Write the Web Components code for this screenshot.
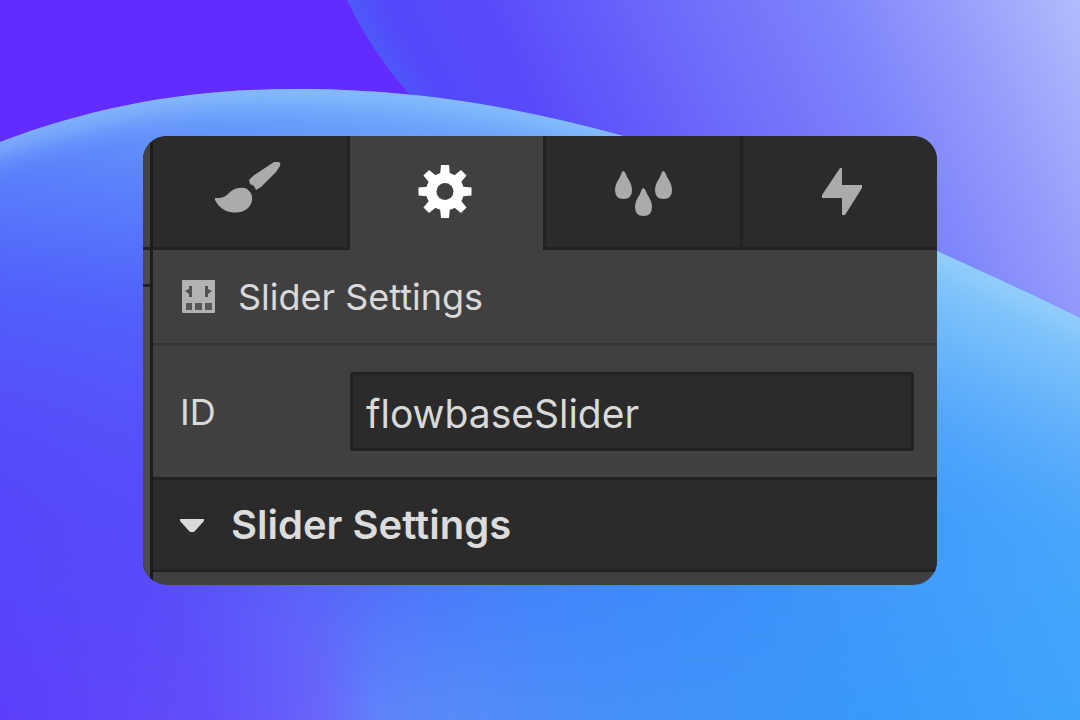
<!DOCTYPE html>
<html lang="en">
<head>
<meta charset="utf-8">
<meta name="viewport" content="width=device-width, initial-scale=1">
<title>Slider Settings</title>
<style>
  body { margin: 0; background: #632cff; font-family: Inter, "Liberation Sans", sans-serif; color: #d9d9d9; }
</style>
</head>
<body>
<settings-stage>
  <settings-panel>
    <panel-tabs></panel-tabs>
    <panel-title>Slider Settings</panel-title>
    <id-field value="flowbaseSlider">ID</id-field>
    <panel-section>Slider Settings</panel-section>
  </settings-panel>
</settings-stage>

<script>
const define = (name, html) => customElements.define(name, class extends HTMLElement {
  constructor() {
    super();
    this.attachShadow({ mode: "open" }).innerHTML = html;
  }
  connectedCallback() {
    const input = this.shadowRoot.querySelector("input");
    if (input) input.value = this.getAttribute("value") || "";
  }
});

define("wave-backdrop", `
  <style>
    :host { display: block; position: fixed; inset: 0; z-index: -1; }
    svg { display: block; width: 100%; height: 100%; }
  </style>
  <svg viewBox="0 0 1080 720" preserveAspectRatio="xMidYMid slice" aria-hidden="true">
    <defs>
      <linearGradient id="back" gradientUnits="userSpaceOnUse" x1="430" y1="50" x2="980" y2="-207">
        <stop offset="0" stop-color="#5549fa"/><stop offset=".12" stop-color="#5a4bfa"/>
        <stop offset=".39" stop-color="#6d6bfa"/><stop offset=".62" stop-color="#7d83fb"/>
        <stop offset=".79" stop-color="#929afb"/><stop offset="1" stop-color="#b0bcfc"/>
      </linearGradient>
      <linearGradient id="front" gradientUnits="userSpaceOnUse" x1="0" y1="0" x2="1080" y2="0">
        <stop offset="0" stop-color="#5746fa"/><stop offset=".16" stop-color="#5a4dfa"/>
        <stop offset=".28" stop-color="#5d65fa"/><stop offset=".38" stop-color="#4e79fa"/>
        <stop offset=".5" stop-color="#4285fa"/><stop offset=".67" stop-color="#3d8ffb"/>
        <stop offset="1" stop-color="#45a6fb"/>
      </linearGradient>
      <linearGradient id="floor" gradientUnits="userSpaceOnUse" x1="0" y1="0" x2="1080" y2="0">
        <stop offset="0" stop-color="#5c3efa"/><stop offset=".2" stop-color="#624ff9"/>
        <stop offset=".3" stop-color="#6a66fa"/><stop offset=".35" stop-color="#6084fa"/>
        <stop offset=".42" stop-color="#588bf9"/><stop offset=".56" stop-color="#4790fa"/>
        <stop offset=".8" stop-color="#3999fa"/><stop offset="1" stop-color="#3fa4fb"/>
      </linearGradient>
      <linearGradient id="down" gradientUnits="userSpaceOnUse" x1="0" y1="590" x2="0" y2="720">
        <stop offset="0" stop-color="#000"/><stop offset="1" stop-color="#fff"/>
      </linearGradient>
      <linearGradient id="across" gradientUnits="userSpaceOnUse" x1="150" y1="0" x2="480" y2="0">
        <stop offset="0" stop-color="#fff"/><stop offset="1" stop-color="#000"/>
      </linearGradient>
      <mask id="lower"><rect width="1080" height="720" fill="url(#down)"/></mask>
      <mask id="leftward"><rect width="1080" height="300" fill="#fff"/><rect y="300" width="1080" height="420" fill="url(#across)"/></mask>
      <linearGradient id="top" gradientUnits="userSpaceOnUse" x1="260" y1="90" x2="180" y2="600">
        <stop offset="0" stop-color="#6ea6fb"/><stop offset=".16" stop-color="#5f8bfb"/>
        <stop offset=".46" stop-color="#5064fa" stop-opacity=".9"/><stop offset="1" stop-color="#5548fa" stop-opacity="0"/>
      </linearGradient>
      <linearGradient id="right" gradientUnits="userSpaceOnUse" x1="1030" y1="285" x2="920" y2="530">
        <stop offset="0" stop-color="#8ccdfb"/><stop offset=".4" stop-color="#65b2fb"/>
        <stop offset="1" stop-color="#469ffb" stop-opacity="0"/>
      </linearGradient>
      <filter id="soft" filterUnits="userSpaceOnUse" x="-60" y="-60" width="1200" height="840"><feGaussianBlur stdDeviation="14"/></filter>
      <clipPath id="hill"><path d="M0 142C95 106 190 89 295 89C420 89 520 108 620 135C735 166 840 207 937 251C990 275 1038 297 1080 318V720H0Z"/></clipPath>
      <clipPath id="slope"><path d="M347 0C362 32 384 66 412 97L620 350H1080V0Z"/></clipPath>
    </defs>
    <rect width="1080" height="720" fill="#632cff"/>
    <g clip-path="url(#slope)">
      <rect x="340" width="740" height="350" fill="url(#back)"/>
      <path d="M335 -30C352 28 378 70 414 116" fill="none" stroke="#4c62fa" stroke-width="34" opacity=".8" filter="url(#soft)"/>
    </g>
    <g clip-path="url(#hill)">
      <rect width="1080" height="720" fill="url(#front)"/>
      <rect width="1080" height="720" fill="url(#floor)" mask="url(#lower)"/>
      <rect width="1080" height="720" fill="url(#top)" mask="url(#leftward)"/>
      <rect x="700" width="380" height="720" fill="url(#right)"/>
      <path d="M-60 160C95 100 190 85 295 85C420 85 520 104 620 131C735 162 840 203 937 247C990 271 1038 293 1130 337" fill="none" stroke="#9bcffc" stroke-width="26" opacity=".75" filter="url(#soft)"/>
    </g>
  </svg>`);

define("settings-stage", `
  <style>
    :host { display: flex; flex-direction: column; justify-content: center; box-sizing: border-box; min-height: 100vh; padding: 16px 143px 15px; }
  </style>
  <wave-backdrop></wave-backdrop>
  <slot></slot>`);

define("settings-panel", `
  <style>
    :host { display: grid; grid-template-columns: 7px 1fr; border-radius: 24px; overflow: hidden; background: #404040; }
    .edge { display: grid; grid-template-rows: 111px 34px 1fr; gap: 3px; background: #222; }
    .edge i { background: #4b4b4b; }
    .edge i:first-child { background: #434343; }
    .body { border-left: 3px solid #1c1c1c; padding-bottom: 13px; min-width: 0; }
  </style>
  <div class="edge" aria-hidden="true"><i></i><i></i><i></i></div>
  <div class="body"><slot></slot></div>`);

define("panel-tabs", `
  <style>
    :host { display: block; }
    div { display: grid; grid-template-columns: 197fr 193fr 197fr 197fr; }
    button { display: flex; align-items: center; justify-content: center; box-sizing: border-box; height: 114px; margin: 0; padding: 0; border: 0 solid #222; border-bottom-width: 3px; background: #2b2b2b; color: #ababab; }
    button:first-child { border-right-width: 3px; }
    button:nth-child(n+3) { border-left-width: 3px; }
    button[aria-selected=true] { background: #404040; border-color: #404040; color: #fff; }
    svg { width: 72px; height: 63px; fill: currentColor; }
  </style>
  <div role="tablist" aria-label="Panels">
    <button role="tab" aria-selected="false" aria-label="Style">
      <svg viewBox="0 0 72 63"><path d="M60 2H65Q67 3 66 6L62 12L47 27L42 30L40 26L36 24L35 20L39 16Z"/><path d="M1 38H6Q12 37 16 32Q22 27 31 28Q36 30 38 36Q39 44 33 49Q26 54 16 52Q6 50 1 40Z"/></svg>
    </button>
    <button role="tab" aria-selected="true" aria-label="Settings">
      <svg viewBox="0 0 72 63"><defs><mask id="hole"><rect width="72" height="63" fill="#fff"/><circle cx="34" cy="31.5" r="8.500" fill="#000"/></mask>
        <path id="tooth" d="M29 16L30 5H38L39 16V47L38 58H30L29 47Z"/></defs>
        <g mask="url(#hole)"><circle cx="34" cy="31.5" r="19"/><use href="#tooth"/><use href="#tooth" transform="rotate(45 34 31.5)"/><use href="#tooth" transform="rotate(90 34 31.5)"/><use href="#tooth" transform="rotate(135 34 31.5)"/></g></svg>
    </button>
    <button role="tab" aria-selected="false" aria-label="Style manager">
      <svg viewBox="0 0 72 63"><path d="M16 11Q18 11 20 17Q25 24 25 30Q25 39 16.500 39Q8 39 8 30Q8 24 13 17Q15 11 16 11Z"/><path d="M56 11Q58 11 60 17Q65 24 65 30Q65 39 56.500 39Q48 39 48 30Q48 24 53 17Q55 11 56 11Z"/><path d="M36 28Q38 28 40 34Q45 41 45 47Q45 56 36.500 56Q28 56 28 47Q28 41 33 34Q35 28 36 28Z"/></svg>
    </button>
    <button role="tab" aria-selected="false" aria-label="Interactions">
      <svg viewBox="0 0 72 63"><path d="M36 8H38V25H58V28L41 55H38V38H18V35Z"/></svg>
    </button>
  </div>`);

define("panel-title", `
  <style>
    :host { display: block; border-bottom: 3px solid #353535; }
    h2 { display: flex; align-items: center; gap: 23px; height: 93px; margin: 0; padding: 0 29px; font-size: 36px; font-weight: 400; line-height: 44px; white-space: nowrap; }
    svg { width: 33px; height: 33px; flex: none; }
  </style>
  <h2><svg viewBox="0 0 33 33" aria-hidden="true"><rect width="33" height="33" rx="1" fill="#b2b2b2"/><path d="M3 11L7 9V6H10V17H7V14ZM30 11L26 9V6H23V17H26V14Z" fill="#505050"/><path d="M4 23H10V30H4ZM13 23H20V30H13ZM23 23H30V30H23Z" fill="#575757"/></svg><slot></slot></h2>`);

define("id-field", `
  <style>
    :host { display: block; }
    div { display: grid; grid-template-columns: 170px 1fr; align-items: center; height: 131px; padding: 0 23px 0 27px; }
    label { font-size: 36px; line-height: 44px; }
    input { box-sizing: border-box; width: 100%; height: 79px; margin: 0; padding: 3px 13px 0; border: 3px solid #222; border-radius: 3px; background: #2b2b2b; color: #d9d9d9; font: 400 39px/48px Inter, "Liberation Sans", sans-serif; outline: 0; }
  </style>
  <div><label for="id"><slot></slot></label><input id="id" type="text" spellcheck="false"></div>`);

define("panel-section", `
  <style>
    :host { display: block; border: solid #222; border-width: 3px 0; background: #2b2b2b; }
    h3 { margin: 0; font-size: inherit; }
    button { display: flex; align-items: center; gap: 26px; width: 100%; height: 89px; margin: 0; padding: 0 26px; border: 0; background: none; color: #dcdcdc; font: 600 40px/48px Inter, "Liberation Sans", sans-serif; white-space: nowrap; text-align: left; }
    svg { width: 26px; height: 14px; flex: none; fill: #d9d9d9; }
  </style>
  <h3><button aria-expanded="true"><svg viewBox="0 0 26 14" aria-hidden="true"><path d="M1 1H25V3L15 14H11L1 3Z"/></svg><slot></slot></button></h3>`);
</script>
</body>
</html>
